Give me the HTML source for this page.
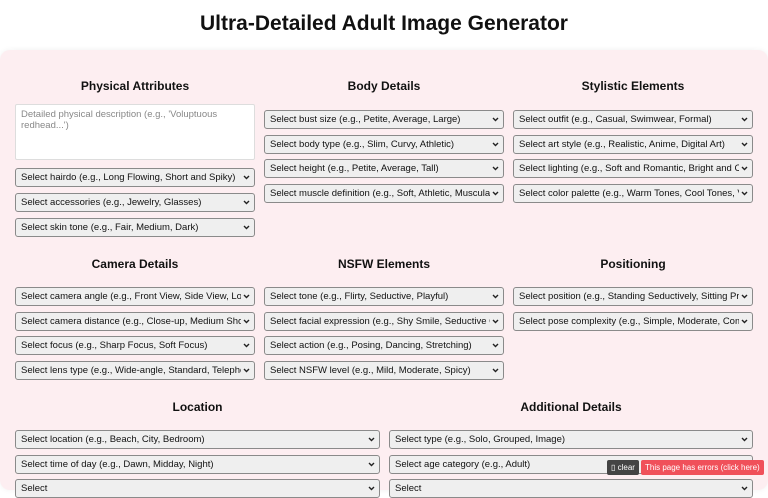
<!DOCTYPE html>
<html><head><meta charset="utf-8"><style>
*{box-sizing:border-box}
body{margin:0;width:768px;height:480px;overflow:hidden;background:#fff;font-family:"Liberation Sans",sans-serif;position:relative}
h1{position:absolute;top:12px;left:0;width:768px;margin:0;text-align:center;font-size:21px;font-weight:bold;color:#111}
.panel{position:absolute;left:0;top:50px;width:768px;height:440px;background:#fdeef1;border-radius:10px;box-shadow:0 0 6px rgba(0,0,0,.06)}
.h{position:absolute;font-size:12px;font-weight:bold;color:#111;text-align:center}
.s{position:absolute;height:19px;background:#efefef;border:1px solid #8a8a8a;border-radius:3px;font-size:9.5px;color:#111}
.s span{position:absolute;left:5px;right:13px;top:3px;white-space:nowrap;overflow:hidden}
.s svg{position:absolute;right:4px;top:6px}
.ta{position:absolute;left:15px;top:104px;width:240px;height:56px;background:#fff;border:1px solid #ddd;border-radius:2px;font-size:9.5px;color:#888;padding:4px 5px;line-height:11px}
.b{position:absolute;font-size:8px;color:#fff;top:460px;height:15px;line-height:15px;padding:0 4px;border-radius:2px}
</style></head><body>
<h1>Ultra-Detailed Adult Image Generator</h1>
<div class="panel"></div>
<div class="h" style="left:15px;width:240px;top:79px">Physical Attributes</div>
<div class="h" style="left:264px;width:240px;top:79px">Body Details</div>
<div class="h" style="left:513px;width:240px;top:79px">Stylistic Elements</div>
<div class="ta">Detailed physical description (e.g., 'Voluptuous redhead...')</div>
<div class="s" style="left:15px;width:240px;top:168px"><span>Select hairdo (e.g., Long Flowing, Short and Spiky)</span></div>
<div class="s" style="left:15px;width:240px;top:193px"><span>Select accessories (e.g., Jewelry, Glasses)</span></div>
<div class="s" style="left:15px;width:240px;top:218px"><span>Select skin tone (e.g., Fair, Medium, Dark)</span></div>
<div class="s" style="left:264px;width:240px;top:110px"><span>Select bust size (e.g., Petite, Average, Large)</span></div>
<div class="s" style="left:264px;width:240px;top:135px"><span>Select body type (e.g., Slim, Curvy, Athletic)</span></div>
<div class="s" style="left:264px;width:240px;top:159px"><span>Select height (e.g., Petite, Average, Tall)</span></div>
<div class="s" style="left:264px;width:240px;top:184px"><span>Select muscle definition (e.g., Soft, Athletic, Muscular)</span></div>
<div class="s" style="left:513px;width:240px;top:110px"><span>Select outfit (e.g., Casual, Swimwear, Formal)</span></div>
<div class="s" style="left:513px;width:240px;top:135px"><span>Select art style (e.g., Realistic, Anime, Digital Art)</span></div>
<div class="s" style="left:513px;width:240px;top:159px"><span>Select lighting (e.g., Soft and Romantic, Bright and Cheerful)</span></div>
<div class="s" style="left:513px;width:240px;top:184px"><span>Select color palette (e.g., Warm Tones, Cool Tones, Vibrant)</span></div>
<div class="h" style="left:15px;width:240px;top:257px">Camera Details</div>
<div class="h" style="left:264px;width:240px;top:257px">NSFW Elements</div>
<div class="h" style="left:513px;width:240px;top:257px">Positioning</div>
<div class="s" style="left:15px;width:240px;top:287px"><span>Select camera angle (e.g., Front View, Side View, Low Angle)</span></div>
<div class="s" style="left:15px;width:240px;top:312px"><span>Select camera distance (e.g., Close-up, Medium Shot, Long Shot)</span></div>
<div class="s" style="left:15px;width:240px;top:336px"><span>Select focus (e.g., Sharp Focus, Soft Focus)</span></div>
<div class="s" style="left:15px;width:240px;top:361px"><span>Select lens type (e.g., Wide-angle, Standard, Telephoto)</span></div>
<div class="s" style="left:264px;width:240px;top:287px"><span>Select tone (e.g., Flirty, Seductive, Playful)</span></div>
<div class="s" style="left:264px;width:240px;top:312px"><span>Select facial expression (e.g., Shy Smile, Seductive Gaze)</span></div>
<div class="s" style="left:264px;width:240px;top:336px"><span>Select action (e.g., Posing, Dancing, Stretching)</span></div>
<div class="s" style="left:264px;width:240px;top:361px"><span>Select NSFW level (e.g., Mild, Moderate, Spicy)</span></div>
<div class="s" style="left:513px;width:240px;top:287px"><span>Select position (e.g., Standing Seductively, Sitting Provocatively)</span></div>
<div class="s" style="left:513px;width:240px;top:312px"><span>Select pose complexity (e.g., Simple, Moderate, Complex)</span></div>
<div class="h" style="left:15px;width:365px;top:400px">Location</div>
<div class="h" style="left:389px;width:364px;top:400px">Additional Details</div>
<div class="s" style="left:15px;width:365px;top:430px"><span>Select location (e.g., Beach, City, Bedroom)</span></div>
<div class="s" style="left:15px;width:365px;top:455px"><span>Select time of day (e.g., Dawn, Midday, Night)</span></div>
<div class="s" style="left:15px;width:365px;top:479px"><span>Select</span></div>
<div class="s" style="left:389px;width:364px;top:430px"><span>Select type (e.g., Solo, Grouped, Image)</span></div>
<div class="s" style="left:389px;width:364px;top:455px"><span>Select age category (e.g., Adult)</span></div>
<div class="s" style="left:389px;width:364px;top:479px"><span>Select</span></div>
<div class="b" style="left:607px;background:#444">▯ clear</div>
<div class="b" style="left:641px;background:#f0505a">This page has errors (click here)</div>
<script>
document.querySelectorAll('.s').forEach(function(e){e.insertAdjacentHTML('beforeend','<svg width="7" height="5" viewBox="0 0 7 5"><path d="M1 1L3.5 3.5L6 1" fill="none" stroke="#222" stroke-width="1.4"/></svg>')});
</script>
</body></html>
